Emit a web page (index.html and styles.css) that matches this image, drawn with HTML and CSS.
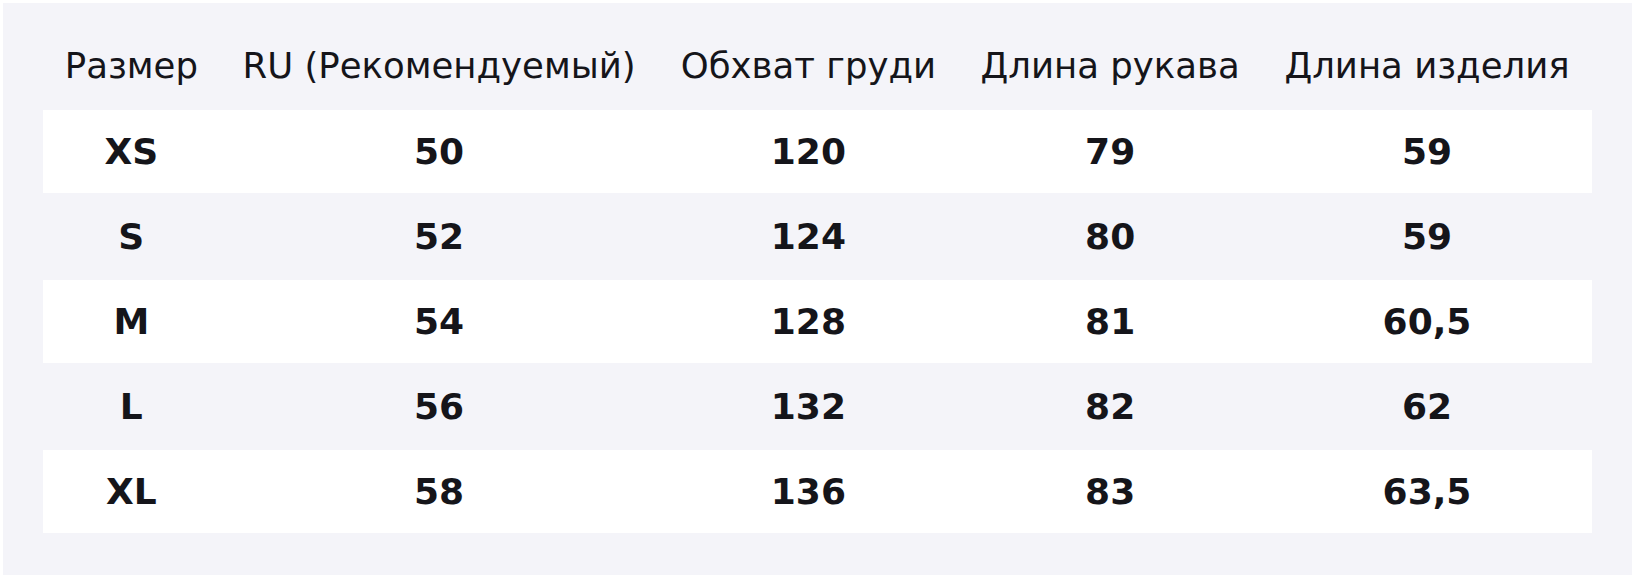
FILE: index.html
```html
<!DOCTYPE html>
<html lang="ru">
<head>
<meta charset="utf-8">
<link rel="stylesheet" href="styles.css">
</head>
<body>
<div class="wrap">
  <table class="sizes">
    <thead>
      <tr>
        <th>Размер</th>
        <th>RU (Рекомендуемый)</th>
        <th>Обхват груди</th>
        <th>Длина рукава</th>
        <th>Длина изделия</th>
      </tr>
    </thead>
    <tbody>
      <tr class="odd"><td>XS</td><td>50</td><td>120</td><td>79</td><td>59</td></tr>
      <tr><td>S</td><td>52</td><td>124</td><td>80</td><td>59</td></tr>
      <tr class="odd"><td>M</td><td>54</td><td>128</td><td>81</td><td>60,5</td></tr>
      <tr><td>L</td><td>56</td><td>132</td><td>82</td><td>62</td></tr>
      <tr class="odd"><td>XL</td><td>58</td><td>136</td><td>83</td><td>63,5</td></tr>
    </tbody>
  </table>
</div>
</body>
</html>
```

FILE: styles.css
```css
html, body {
  margin: 0;
  padding: 0;
  background: #ffffff;
}
body {
  padding: 3px;
  font-family: "DejaVu Sans", sans-serif;
  color: #15151a;
}
.wrap {
  background: #f4f4f9;
  padding: 40px;
  height: 492px;
}
.sizes {
  width: 100%;
  border-collapse: separate;
  border-spacing: 0 2px;
}
.sizes th {
  font-weight: normal;
  font-size: 35.5px;
  line-height: 42px;
  padding: 0 21px 21px;
  text-align: center;
  white-space: nowrap;
  vertical-align: top;
}
.sizes td {
  font-weight: bold;
  font-size: 36px;
  height: 83px;
  padding: 0 20px;
  text-align: center;
  vertical-align: middle;
  box-sizing: border-box;
}
.sizes tr.odd td {
  background: #ffffff;
}
```
